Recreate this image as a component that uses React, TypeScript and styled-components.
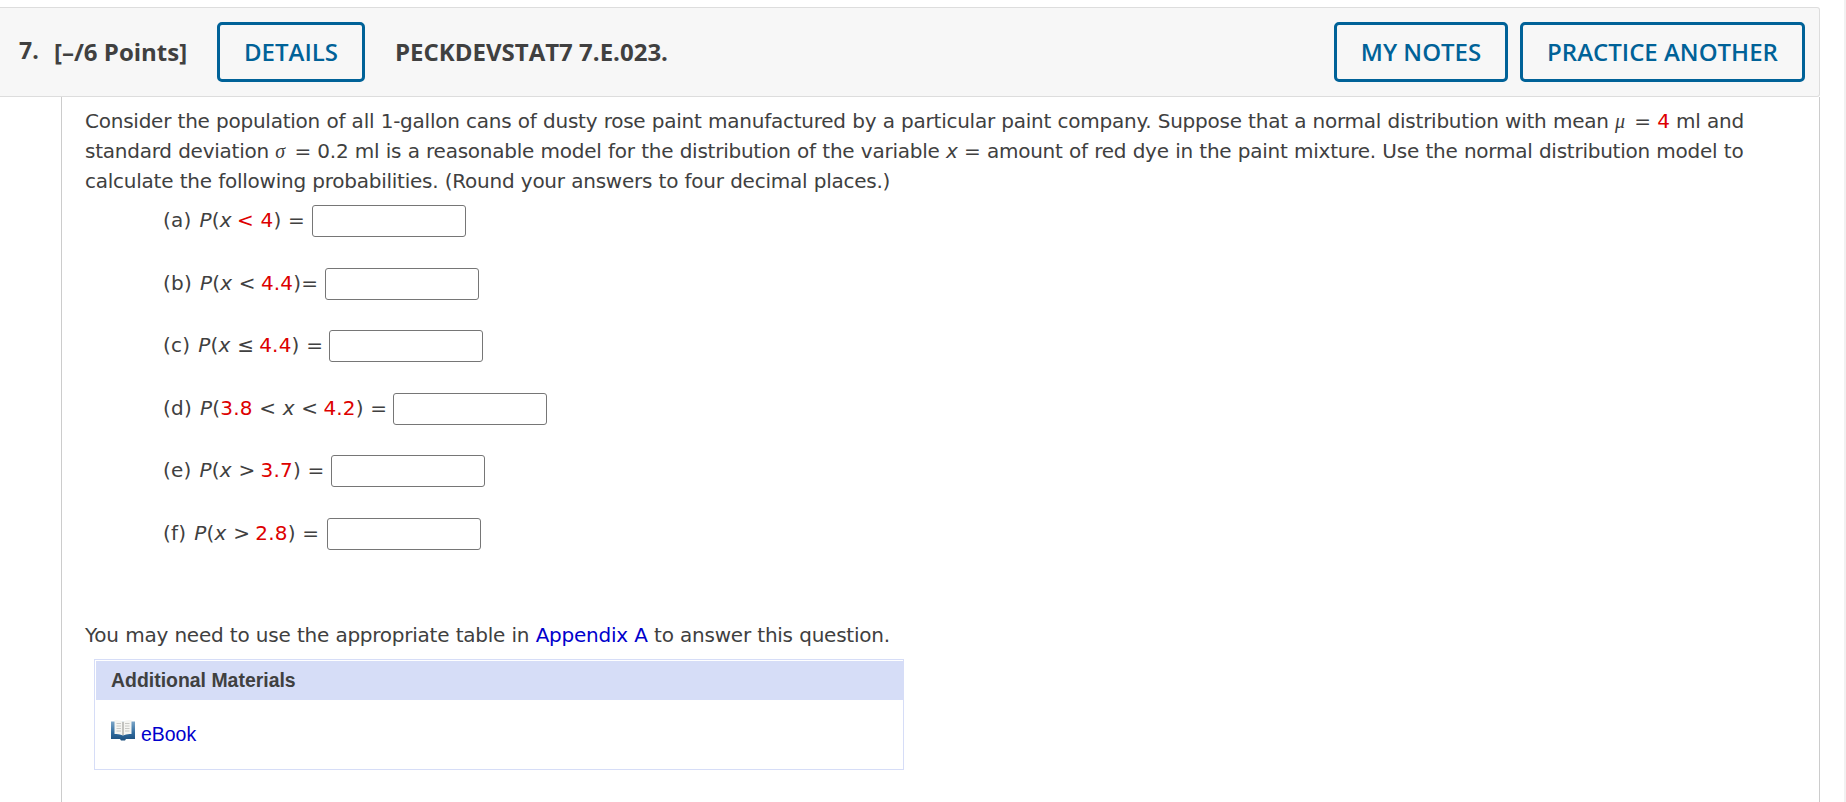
import { ReactNode } from "react";
import styled, { createGlobalStyle } from "styled-components";

const parts: { id: string; label: ReactNode; gap: number }[] = [
  { id: "a", label: <>(a) <i>P</i>(<i>x</i> <b>&lt; 4</b>) =</>, gap: 7 },
  { id: "b", label: <>(b) <i>P</i>(<i>x</i> &lt; <b>4.4</b>)=</>, gap: 6.5 },
  { id: "c", label: <>(c) <i>P</i>(<i>x</i> ≤ <b>4.4</b>) =</>, gap: 5.5 },
  { id: "d", label: <>(d) <i>P</i>(<b>3.8</b> &lt; <i>x</i> &lt; <b>4.2</b>) =</>, gap: 6 },
  { id: "e", label: <>(e) <i>P</i>(<i>x</i> &gt; <b>3.7</b>) =</>, gap: 6.5 },
  { id: "f", label: <>(f) <i>P</i>(<i>x</i> &gt; <b>2.8</b>) =</>, gap: 7.5 },
];

const BookIcon = () => (
  <svg width="24" height="22" viewBox="0 0 24 22">
    <defs>
      <linearGradient id="cover" x1="0" y1="0" x2="0" y2="1">
        <stop offset="0" stopColor="#7ba6c8" />
        <stop offset="0.6" stopColor="#2f6a9d" />
        <stop offset="1" stopColor="#1d4f7e" />
      </linearGradient>
    </defs>
    <path d="M0 2.500h24v17.500H15l-1 1.500h-4l-1-1.500H0z" fill="url(#cover)" />
    <path d="M3.500 1q5-.5 8.500 1.500q3.500-2 8.500-1.500v14q-5-.5-8.500 1.500q-3.500-2-8.500-1.500z" fill="#f5f5f2" />
    <path d="M12 3v13" stroke="#b0b0ac" strokeWidth="1.500" />
    <path
      d="M5.500 4.500h4.500M5.500 7h4.500M5.500 9.500h4.500M5.500 12h4.500M14 4.500h4.500M14 7h4.500M14 9.500h4.500M14 12h4.500"
      stroke="#c8c8c4"
    />
  </svg>
);

const App = () => (
  <Page>
    <GlobalStyle />
    <Question>
      <Header>
        <Number>7.</Number>
        <Points>[–/6 Points]</Points>
        <HeaderButton $width={148}>DETAILS</HeaderButton>
        <Source>PECKDEVSTAT7 7.E.023.</Source>
        <Actions>
          <HeaderButton $width={174}>MY NOTES</HeaderButton>
          <HeaderButton $width={285}>PRACTICE ANOTHER</HeaderButton>
        </Actions>
      </Header>
      <Body>
        <Paragraph>
          <Line>
            Consider the population of all 1-gallon cans of dusty rose paint manufactured by a particular paint company.
            Suppose that a normal distribution with mean <Greek>μ</Greek> = <b>4</b> ml and
          </Line>
          <Line>
            standard deviation <Greek>σ</Greek> = 0.2 ml is a reasonable model for the distribution of the variable{" "}
            <i>x</i> = amount of red dye in the paint mixture. Use the normal distribution model to
          </Line>
          <Line>calculate the following probabilities. (Round your answers to four decimal places.)</Line>
        </Paragraph>
        <Parts>
          {parts.map(({ id, label, gap }) => (
            <Part key={id}>
              <Label $gap={gap}>{label}</Label>
              <Answer aria-label={`Answer ${id}`} />
            </Part>
          ))}
        </Parts>
        <Line>
          You may need to use the appropriate table in <Link href="#">Appendix A</Link> to answer this question.
        </Line>
        <Materials>
          <MaterialsTitle>Additional Materials</MaterialsTitle>
          <MaterialsItem>
            <BookIcon />
            <Link href="#">eBook</Link>
          </MaterialsItem>
        </Materials>
      </Body>
    </Question>
  </Page>
);

export default App;

const GlobalStyle = createGlobalStyle`
  * {
    box-sizing: border-box;
  }
  body {
    margin: 0;
    background: #fff;
    color: #404040;
    overflow: hidden;
  }
`;

const Page = styled.div`
  height: 802px;
  padding: 7px 24px 0 0;
  border-right: 2px solid #f1f1f1;
  overflow: hidden;
`;

const Question = styled.div`
  display: flex;
  flex-direction: column;
  height: 100%;
`;

const Header = styled.div`
  display: flex;
  align-items: center;
  height: 90px;
  flex-shrink: 0;
  padding: 0 14px 0 19px;
  border: 1px solid #ddd;
  border-left: none;
  border-radius: 0 3px 3px 0;
  background: #f7f7f7;
  font-family: "Open Sans", sans-serif;
  font-size: 24px;
  font-weight: 700;
  white-space: nowrap;
`;

const Number = styled.span`
  width: 35px;
  padding-bottom: 4px;
  font-size: 23px;
`;

const Points = styled.span`
  width: 163px;
  padding-bottom: 2px;
`;

const HeaderButton = styled.button<{ $width: number }>`
  width: ${({ $width }) => $width}px;
  height: 60px;
  padding: 0 0 2px;
  border: 3px solid #006298;
  border-radius: 5px;
  background: transparent;
  color: #006298;
  font: 600 24px "Open Sans", sans-serif;
  white-space: nowrap;
`;

const Source = styled.span`
  margin-left: 30px;
  padding-bottom: 2px;
`;

const Actions = styled.div`
  display: flex;
  gap: 12px;
  margin-left: auto;
`;

const Body = styled.div`
  flex: 1;
  margin-left: 61px;
  padding: 9px 0 0 23px;
  border: 1px solid #ccc;
  border-width: 0 1px;
  font-family: Verdana, "DejaVu Sans", sans-serif;
  font-size: 20px;
  line-height: 30px;

  b {
    color: #d00;
    font-weight: 400;
  }
`;

const Paragraph = styled.div`
  margin-bottom: 9px;
`;

const Line = styled.div`
  letter-spacing: -0.245px;
  word-spacing: 0.3px;
  white-space: nowrap;
`;

const Greek = styled.i`
  margin-right: 3px;
  font-family: "Liberation Serif", serif;
`;

const Parts = styled.div`
  margin: 0 0 39px 78px;
`;

const Part = styled.div`
  display: flex;
  height: 62.6px;
`;

const Label = styled.span<{ $gap: number }>`
  margin-right: ${({ $gap }) => $gap}px;
  letter-spacing: 0.2px;
  white-space: nowrap;

  i:first-of-type {
    margin-left: 1.5px;
  }
  b:last-of-type {
    margin-left: -1.5px;
  }
`;

const Answer = styled.input`
  width: 154px;
  height: 32px;
  border: 1px solid #767676;
  border-radius: 3px;
  background: #fff;
`;

const Link = styled.a`
  color: #00c;
  text-decoration: none;
`;

const Materials = styled.div`
  width: 810px;
  height: 111px;
  margin: 9px 0 0 9px;
  padding: 1px 0 0 1px;
  border: 1px solid #d6ddf7;
  font-family: "Liberation Sans", Arial, sans-serif;
  font-size: 19.45px;
  letter-spacing: 0;
`;

const MaterialsTitle = styled.div`
  height: 39px;
  padding-left: 15px;
  background: #d6ddf7;
  font-weight: 700;
  line-height: 38px;
`;

const MaterialsItem = styled.div`
  display: flex;
  align-items: flex-start;
  gap: 6px;
  padding: 19px 0 0 15px;
`;
